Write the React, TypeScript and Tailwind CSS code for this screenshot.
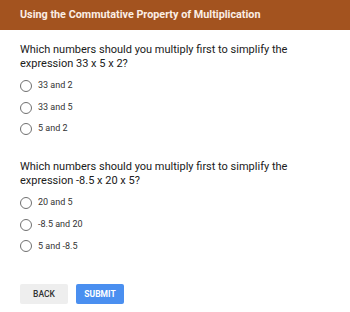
const questions = [
  {
    text: "Which numbers should you multiply first to simplify the expression 33 x 5 x 2?",
    options: ["33 and 2", "33 and 5", "5 and 2"],
  },
  {
    text: "Which numbers should you multiply first to simplify the expression -8.5 x 20 x 5?",
    options: ["20 and 5", "-8.5 and 20", "5 and -8.5"],
  },
];

function Radio() {
  return <span className="w-[12px] h-[12px] rounded-full border-[1.5px] border-[#707070] bg-white shrink-0" />;
}

export default function App() {
  return (
    <div className="w-[350px] h-[312px] bg-white overflow-hidden" style={{ fontFamily: "Roboto, 'Liberation Sans', sans-serif" }}>
      <div className="h-[30px] bg-[#a3531f] flex items-center px-5">
        <h1 className="text-[10.8px] font-bold text-[#fbeee4]">Using the Commutative Property of Multiplication</h1>
      </div>

      <div className="px-5 pt-[13px]">
        {questions.map((q, i) => (
          <div key={i} className={i > 0 ? "mt-[20px]" : ""}>
            <p className="text-[11px] leading-[14px] text-[#202020] max-w-[300px]">{q.text}</p>
            <div className="mt-[4px]">
              {q.options.map((o) => (
                <label key={o} className="flex items-center gap-[6px] h-[21.7px]">
                  <Radio />
                  <span className="text-[9px] text-[#333]">{o}</span>
                </label>
              ))}
            </div>
          </div>
        ))}

        <div className="flex gap-2 mt-[27px]">
          <button className="w-[48px] h-[20px] rounded-[2px] bg-[#eeeeee] text-[8.5px] font-medium text-[#333]">BACK</button>
          <button className="w-[48px] h-[20px] rounded-[2px] bg-[#4a8ff0] text-[8.5px] font-bold text-white">SUBMIT</button>
        </div>
      </div>
    </div>
  );
}
